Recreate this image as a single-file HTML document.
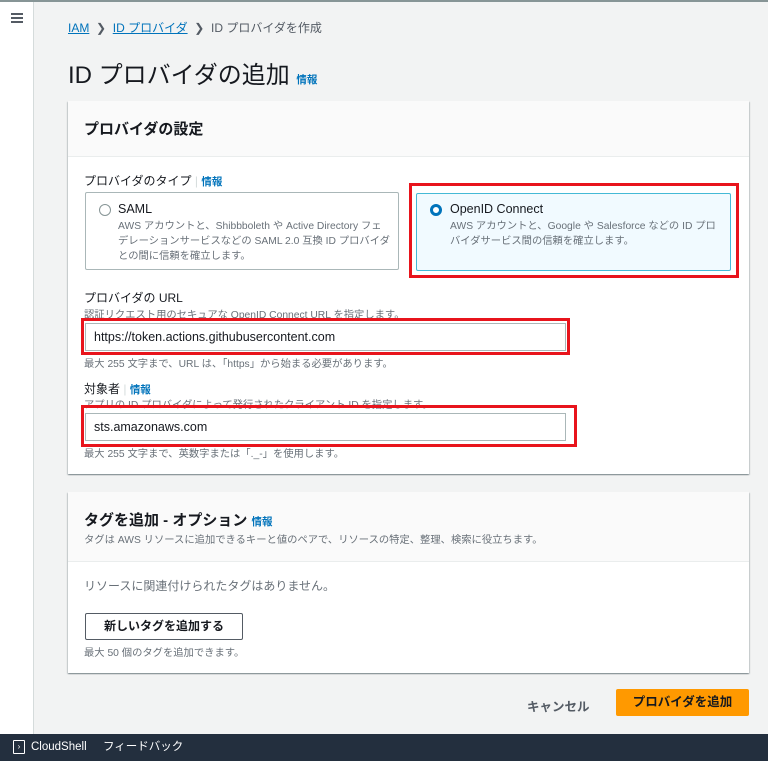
<!DOCTYPE html>
<html><head><meta charset="utf-8"><style>
*{margin:0;padding:0;box-sizing:border-box}
body{width:768px;height:761px;overflow:hidden;background:#f2f3f3;font-family:"Liberation Sans","Noto Sans CJK JP",sans-serif;color:#16191f;position:relative}
.a{position:absolute;white-space:nowrap}
.link{color:#0073bb}
.card{position:absolute;background:#fff;box-shadow:0 1px 1px rgba(0,28,36,.3),1px 1px 1px rgba(0,28,36,.15),-1px 1px 1px rgba(0,28,36,.15)}
.hd{background:#fafafa;border-bottom:1px solid #eaeded}
.small{font-size:10.3px;color:#687078}
.in{position:absolute;border:1px solid #aab7b8;background:#fff;font-size:12.5px;padding:0 8px;line-height:26px;height:28px}
.red{position:absolute;border:3px solid #e8141c}
</style></head><body>
<div class="a" style="left:0;top:0;width:768px;height:2px;background:#879596"></div>
<div class="a" style="left:0;top:2px;width:34px;height:732px;background:#fff;border-right:1px solid #d5dbdb"></div>
<div class="a" style="left:11px;top:13px;width:12px;height:2px;background:#545b64;box-shadow:0 4px 0 #545b64,0 8px 0 #545b64"></div>
<div class="a" style="left:68px;top:19px;font-size:12px;color:#545b64"><span class="link" style="text-decoration:underline">IAM</span>&nbsp; ❯ &nbsp;<span class="link" style="text-decoration:underline">ID プロバイダ</span>&nbsp; ❯ &nbsp;ID プロバイダを作成</div>
<div class="a" style="left:68px;top:55px;font-size:24px">ID プロバイダの追加 <span class="link" style="font-size:10.5px;font-weight:bold">情報</span></div>

<div class="card" style="left:68px;top:101px;width:681px;height:373px">
<div class="hd" style="height:56px"></div>
<div class="a" style="left:16px;top:17px;font-size:15px;font-weight:bold">プロバイダの設定</div>
<div class="a" style="left:16px;top:71px;font-size:12px;color:#16191f">プロバイダのタイプ <span style="color:#d5dbdb">|</span> <span class="link" style="font-weight:bold;font-size:10.5px">情報</span></div>
<div class="a" style="left:17px;top:91px;width:314px;height:78px;border:1px solid #aab7b8;border-radius:2px"></div>
<div class="a" style="left:31px;top:103px;width:12px;height:12px;border:1.5px solid #879596;border-radius:50%"></div>
<div class="a" style="left:50px;top:101px;font-size:12.5px">SAML</div>
<div class="a small" style="left:50px;top:118px;line-height:15px;white-space:normal;width:272px">AWS アカウントと、Shibbboleth や Active Directory フェデレーションサービスなどの SAML 2.0 互換 ID プロバイダとの間に信頼を確立します。</div>
<div class="a" style="left:348px;top:92px;width:315px;height:78px;border:1px solid #44b9d6;background:#f1faff;border-radius:2px"></div>
<div class="a" style="left:362px;top:103px;width:12px;height:12px;border:3.5px solid #0073bb;border-radius:50%;background:#fff"></div>
<div class="a" style="left:382px;top:101px;font-size:12.5px">OpenID Connect</div>
<div class="a small" style="left:382px;top:118px;line-height:15px;white-space:normal;width:268px">AWS アカウントと、Google や Salesforce などの ID プロバイダサービス間の信頼を確立します。</div>
<div class="a" style="left:16px;top:188px;font-size:12px">プロバイダの URL</div>
<div class="a small" style="left:16px;top:205px">認証リクエスト用のセキュアな OpenID Connect URL を指定します。</div>
<div class="in" style="left:17px;top:222px;width:481px">https://token.actions.githubusercontent.com</div>
<div class="a small" style="left:16px;top:254px">最大 255 文字まで、URL は、「https」から始まる必要があります。</div>
<div class="a" style="left:16px;top:279px;font-size:12px">対象者 <span style="color:#d5dbdb">|</span> <span class="link" style="font-weight:bold;font-size:10.5px">情報</span></div>
<div class="a small" style="left:16px;top:295px">アプリの ID プロバイダによって発行されたクライアント ID を指定します。</div>
<div class="in" style="left:17px;top:312px;width:481px">sts.amazonaws.com</div>
<div class="a small" style="left:16px;top:344px">最大 255 文字まで、英数字または「._-」を使用します。</div>
</div>

<div class="card" style="left:68px;top:492px;width:681px;height:181px">
<div class="hd" style="height:70px"></div>
<div class="a" style="left:16px;top:17px;font-size:15px;font-weight:bold">タグを追加 - オプション <span class="link" style="font-size:10.5px">情報</span></div>
<div class="a small" style="left:16px;top:39px">タグは AWS リソースに追加できるキーと値のペアで、リソースの特定、整理、検索に役立ちます。</div>
<div class="a" style="left:16px;top:85px;font-size:12px;color:#687078">リソースに関連付けられたタグはありません。</div>
<div class="a" style="left:17px;top:121px;width:158px;height:27px;border:1px solid #545b64;border-radius:2px;font-size:12px;font-weight:bold;text-align:center;line-height:25px">新しいタグを追加する</div>
<div class="a small" style="left:16px;top:152px">最大 50 個のタグを追加できます。</div>
</div>

<div class="a" style="left:527px;top:696px;font-size:12.5px;font-weight:bold;color:#545b64">キャンセル</div>
<div class="a" style="left:616px;top:689px;width:133px;height:27px;background:#ff9900;border-radius:2px;font-size:12.5px;font-weight:bold;text-align:center;line-height:27px">プロバイダを追加</div>

<div class="a" style="left:0;top:734px;width:768px;height:27px;background:#232f3e"></div>
<div class="a" style="left:13px;top:740px;width:12px;height:14px;border:1px solid #fff;border-radius:1px;color:#fff;font-size:8px;line-height:12px;text-align:center">›</div>
<div class="a" style="left:31px;top:740px;font-size:11.5px;color:#fff;line-height:14px">CloudShell</div>
<div class="a" style="left:103px;top:740px;font-size:11.5px;color:#fff;line-height:14px">フィードバック</div>

<div class="red" style="left:409px;top:183px;width:330px;height:95px"></div>
<div class="red" style="left:81px;top:318px;width:489px;height:37px"></div>
<div class="red" style="left:81px;top:405px;width:496px;height:42px"></div>
</body></html>
